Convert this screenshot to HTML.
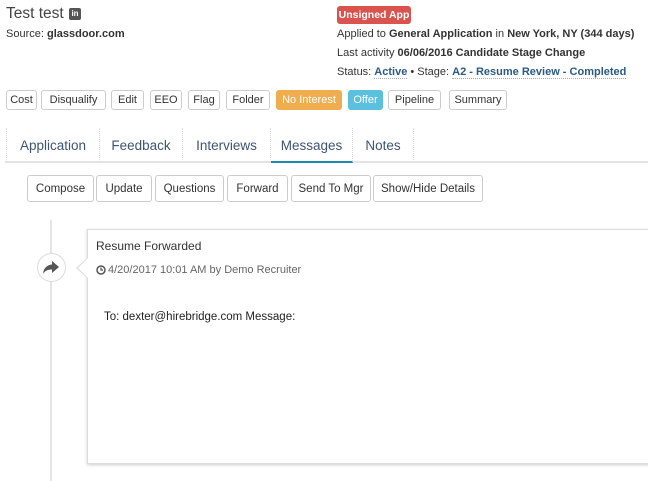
<!DOCTYPE html>
<html><head><style>
*{box-sizing:border-box;margin:0;padding:0}
body{width:648px;height:481px;overflow:hidden;background:#fff;font-family:"Liberation Sans",sans-serif;color:#333;position:relative;font-size:11px}
.a{position:absolute;white-space:nowrap}
b{font-weight:bold}
.btn{position:absolute;top:90px;height:20px;border:1px solid #ccc;border-radius:3px;font-size:11px;line-height:18px;text-align:center;color:#333;background:#fff}
.tab{position:absolute;top:128px;height:34px;line-height:35px;font-size:13.5px;color:#3e5570;text-align:center;border-right:1px dotted #ddd}
.ab{position:absolute;top:175px;height:27px;border:1px solid #ccc;border-radius:3px;font-size:11.5px;line-height:26px;text-align:center;color:#333}
</style></head><body>
<div class="a" style="left:6px;top:5px;font-size:15.5px;color:#444">Test test</div>
<div class="a" style="left:69px;top:8px;width:12px;height:12px;background:#555;border-radius:2px;color:#fff;font-size:8px;font-weight:bold;line-height:12px;text-align:center">in</div>
<div class="a" style="left:6px;top:28px">Source: <b>glassdoor.com</b></div>
<div class="a" style="left:337px;top:6px;width:74px;height:18px;background:#d9534f;border-radius:3px;color:#fff;font-size:10.5px;font-weight:bold;line-height:18px;text-align:center">Unsigned App</div>
<div class="a" style="left:337px;top:28px">Applied to <b>General Application</b> in <b>New York, NY (344 days)</b></div>
<div class="a" style="left:337px;top:47px">Last activity <b>06/06/2016 Candidate Stage Change</b></div>
<div class="a" style="left:337px;top:66px">Status: <b style="color:#2a5a86;border-bottom:1px dotted #aaa">Active</b> • Stage: <b style="color:#2a5a86;border-bottom:1px dotted #aaa">A2 - Resume Review - Completed</b></div>
<div class="btn" style="left:6px;width:31px">Cost</div>
<div class="btn" style="left:41px;width:65px">Disqualify</div>
<div class="btn" style="left:111px;width:33px">Edit</div>
<div class="btn" style="left:150px;width:32px">EEO</div>
<div class="btn" style="left:188px;width:32px">Flag</div>
<div class="btn" style="left:226px;width:44px">Folder</div>
<div class="btn" style="left:276px;width:66px;background:#f0ad4e;border-color:#f0ad4e;color:#fff">No Interest</div>
<div class="btn" style="left:348px;width:35px;background:#5bc0de;border-color:#5bc0de;color:#fff">Offer</div>
<div class="btn" style="left:388px;width:53px">Pipeline</div>
<div class="btn" style="left:449px;width:58px">Summary</div>
<div class="a" style="left:5px;top:161px;width:643px;height:2px;background:#e3e3e3"></div>
<div class="tab" style="left:6px;width:94px;border-left:1px dotted #ddd">Application</div>
<div class="tab" style="left:100px;width:83px">Feedback</div>
<div class="tab" style="left:183px;width:88px">Interviews</div>
<div class="tab" style="left:271px;width:82px;border-bottom:2px solid #1a8ab5;height:35px">Messages</div>
<div class="tab" style="left:353px;width:61px">Notes</div>
<div class="ab" style="left:27px;width:67px">Compose</div>
<div class="ab" style="left:96px;width:56px">Update</div>
<div class="ab" style="left:155px;width:69px">Questions</div>
<div class="ab" style="left:227px;width:61px">Forward</div>
<div class="ab" style="left:291px;width:80px">Send To Mgr</div>
<div class="ab" style="left:373px;width:110px">Show/Hide Details</div>
<div class="a" style="left:50px;top:220px;width:2px;height:261px;background:#e5e5e5"></div>
<div class="a" style="left:37px;top:253px;width:29px;height:29px;border-radius:50%;background:#fff;border:1px solid #ddd"></div>
<svg class="a" style="left:42px;top:259px" width="18" height="16" viewBox="0 0 18 16"><path d="M10 2 L17 8 L10 14 L10 10.5 C6 10.5 3 11.5 1 15 C1.5 9 5 6 10 5.5 Z" fill="#555"/></svg>
<div class="a" style="left:87px;top:229px;width:570px;height:235px;background:#fff;border:1px solid #ddd;box-shadow:0 1px 3px rgba(0,0,0,.2)"></div>
<div class="a" style="left:76px;top:258px;width:0;height:0;border-top:10px solid transparent;border-bottom:10px solid transparent;border-right:11px solid #ddd"></div>
<div class="a" style="left:78px;top:258px;width:0;height:0;border-top:10px solid transparent;border-bottom:10px solid transparent;border-right:10px solid #fff"></div>
<div class="a" style="left:96px;top:239px;font-size:12px;color:#333">Resume Forwarded</div>
<svg class="a" style="left:96px;top:265px" width="10" height="10" viewBox="0 0 10 10"><circle cx="5" cy="5" r="4" fill="none" stroke="#555" stroke-width="1.5"/><path d="M5 2.5V5H7" fill="none" stroke="#555" stroke-width="1.2"/></svg>
<div class="a" style="left:108px;top:264px;font-size:11px;color:#666">4/20/2017 10:01 AM by Demo Recruiter</div>
<div class="a" style="left:104px;top:311px;font-size:11.5px;color:#222">To: dexter@hirebridge.com Message:</div>
</body></html>
